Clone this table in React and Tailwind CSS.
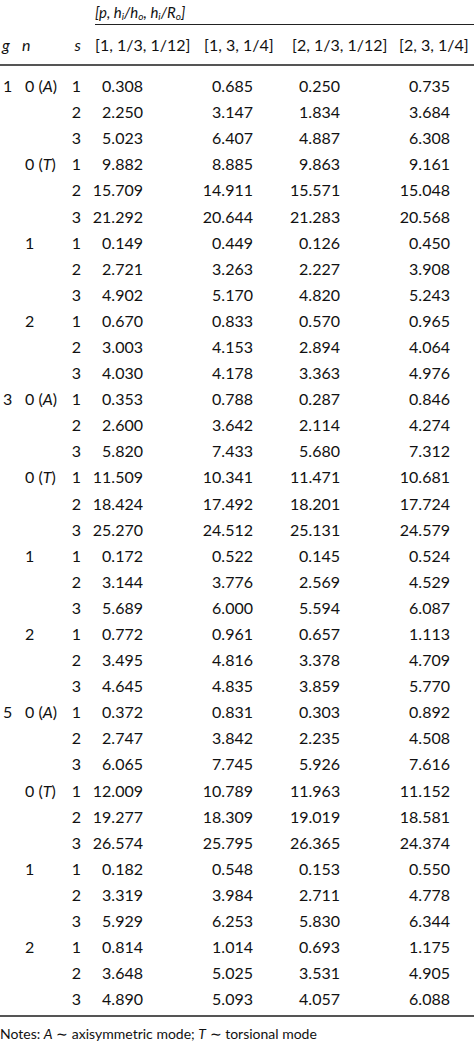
const groups = [
  {
    g: "1",
    modes: [
      { n: "0", m: "A", rows: [["0.308", "0.685", "0.250", "0.735"], ["2.250", "3.147", "1.834", "3.684"], ["5.023", "6.407", "4.887", "6.308"]] },
      { n: "0", m: "T", rows: [["9.882", "8.885", "9.863", "9.161"], ["15.709", "14.911", "15.571", "15.048"], ["21.292", "20.644", "21.283", "20.568"]] },
      { n: "1", rows: [["0.149", "0.449", "0.126", "0.450"], ["2.721", "3.263", "2.227", "3.908"], ["4.902", "5.170", "4.820", "5.243"]] },
      { n: "2", rows: [["0.670", "0.833", "0.570", "0.965"], ["3.003", "4.153", "2.894", "4.064"], ["4.030", "4.178", "3.363", "4.976"]] },
    ],
  },
  {
    g: "3",
    modes: [
      { n: "0", m: "A", rows: [["0.353", "0.788", "0.287", "0.846"], ["2.600", "3.642", "2.114", "4.274"], ["5.820", "7.433", "5.680", "7.312"]] },
      { n: "0", m: "T", rows: [["11.509", "10.341", "11.471", "10.681"], ["18.424", "17.492", "18.201", "17.724"], ["25.270", "24.512", "25.131", "24.579"]] },
      { n: "1", rows: [["0.172", "0.522", "0.145", "0.524"], ["3.144", "3.776", "2.569", "4.529"], ["5.689", "6.000", "5.594", "6.087"]] },
      { n: "2", rows: [["0.772", "0.961", "0.657", "1.113"], ["3.495", "4.816", "3.378", "4.709"], ["4.645", "4.835", "3.859", "5.770"]] },
    ],
  },
  {
    g: "5",
    modes: [
      { n: "0", m: "A", rows: [["0.372", "0.831", "0.303", "0.892"], ["2.747", "3.842", "2.235", "4.508"], ["6.065", "7.745", "5.926", "7.616"]] },
      { n: "0", m: "T", rows: [["12.009", "10.789", "11.963", "11.152"], ["19.277", "18.309", "19.019", "18.581"], ["26.574", "25.795", "26.365", "24.374"]] },
      { n: "1", rows: [["0.182", "0.548", "0.153", "0.550"], ["3.319", "3.984", "2.711", "4.778"], ["5.929", "6.253", "5.830", "6.344"]] },
      { n: "2", rows: [["0.814", "1.014", "0.693", "1.175"], ["3.648", "5.025", "3.531", "4.905"], ["4.890", "5.093", "4.057", "6.088"]] },
    ],
  },
];

const grid = "grid grid-cols-[22px_44px_15px_119px_90px_105px_79px]";
const valuePad = ["pr-[57px]", "pr-[37px]", "pr-[55px]", "pr-[24px]"];

const Row = ({ g, n, m, s, values }) => (
  <div className={`${grid} h-[26.1px] items-center`}>
    <div className="pl-[3px]">{g}</div>
    <div className="pl-[3px] whitespace-nowrap">
      {n}
      {m && (
        <>
          {" "}(<i>{m}</i>)
        </>
      )}
    </div>
    <div className="text-right">{s}</div>
    {values.map((v, i) => (
      <div key={i} className={`text-right ${valuePad[i]}`}>
        {v}
      </div>
    ))}
  </div>
);

const App = () => {
  return (
    <div className="w-[474px] h-[1043px] bg-white text-[#111] text-[16px] leading-none font-['Lato',sans-serif] overflow-hidden">
      {/* header */}
      <div className={`${grid} h-[25px]`}>
        <div className="col-start-4 col-span-4 ml-[14px] border-b border-[#222] flex items-center italic text-[15px]">
          <span>
            [p, h<sub className="text-[10px]">i</sub>/h<sub className="text-[10px]">o</sub>, h<sub className="text-[10px]">i</sub>/R
            <sub className="text-[10px]">o</sub>]
          </span>
        </div>
      </div>
      <div className={`${grid} h-[41px] items-center border-b-2 border-[#555]`}>
        <div className="italic pl-[2px]">g</div>
        <div className="italic pl-0">n</div>
        <div className="italic text-right">s</div>
        <div className="pl-[14px] whitespace-nowrap">[1, 1/3, 1/12]</div>
        <div className="pl-[4px] whitespace-nowrap">[1, 3, 1/4]</div>
        <div className="pl-[2px] whitespace-nowrap">[2, 1/3, 1/12]</div>
        <div className="pl-[4px] whitespace-nowrap">[2, 3, 1/4]</div>
      </div>

      {/* body */}
      <div className="pt-[7px] pb-[3px] border-b-2 border-[#555]">
        {groups.map((grp) =>
          grp.modes.map((mode, mi) =>
            mode.rows.map((vals, si) => (
              <Row
                key={`${grp.g}-${mi}-${si}`}
                g={mi === 0 && si === 0 ? grp.g : ""}
                n={si === 0 ? mode.n : ""}
                m={si === 0 ? mode.m : null}
                s={String(si + 1)}
                values={vals}
              />
            ))
          )
        )}
      </div>

      <div className="pt-[10px] text-[14px]">
        Notes: <i>A</i> ∼ axisymmetric mode; <i>T</i> ∼ torsional mode
      </div>
    </div>
  );
};

export default App;
